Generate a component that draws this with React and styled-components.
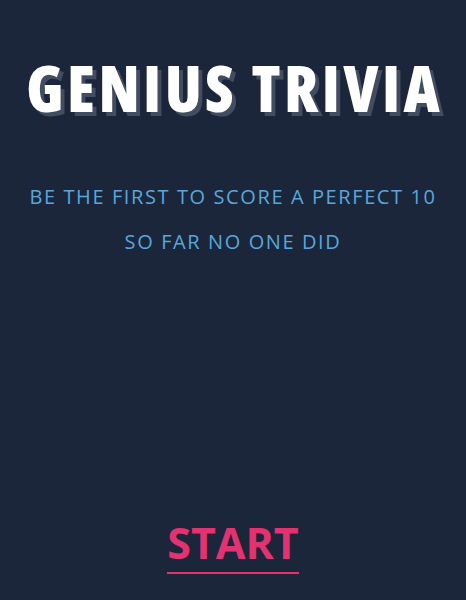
import React from "react";
import styled, { createGlobalStyle } from "styled-components";

const Global = createGlobalStyle`
  html, body { margin: 0; padding: 0; background: #1b263a; }
  body { font-family: "Open Sans", "DejaVu Sans", sans-serif; }
`;

const Screen = styled.div`
  width: 466px;
  height: 600px;
  box-sizing: border-box;
  background: #1b263a;
  display: flex;
  flex-direction: column;
  align-items: center;
  padding-top: 50px;
`;

const Title = styled.h1`
  margin: 0;
  font-family: "Open Sans", sans-serif;
  font-stretch: 75%;
  font-weight: 800;
  font-size: 63px;
  line-height: 76px;
  color: #ffffff;
  letter-spacing: 3.4px;
  text-indent: 3.4px;
  text-shadow: 4px 4px 0 #434d61;
  white-space: nowrap;
`;

const Taglines = styled.div`
  margin-top: 48px;
  display: flex;
  flex-direction: column;
  align-items: center;
`;

const Tagline = styled.p`
  margin: 0;
  font-family: "Open Sans", sans-serif;
  font-weight: 400;
  font-size: 20px;
  line-height: 45px;
  letter-spacing: 1.6px;
  color: #58a6dd;
  text-align: center;
  white-space: nowrap;
`;

const Spacer = styled.div`
  flex: 1;
`;

const StartButton = styled.button`
  margin: 0 0 26px;
  background: none;
  border: none;
  border-bottom: 2px solid #e2326f;
  padding: 0 0 8px;
  font-family: "Open Sans", sans-serif;
  font-weight: 700;
  font-size: 43px;
  line-height: 43px;
  color: #e2326f;
  cursor: pointer;
`;

export default function App() {
  return (
    <>
      <Global />
      <Screen>
        <Title>GENIUS TRIVIA</Title>
        <Taglines>
          <Tagline>BE THE FIRST TO SCORE A PERFECT 10</Tagline>
          <Tagline>SO FAR NO ONE DID</Tagline>
        </Taglines>
        <Spacer />
        <StartButton>START</StartButton>
      </Screen>
    </>
  );
}
